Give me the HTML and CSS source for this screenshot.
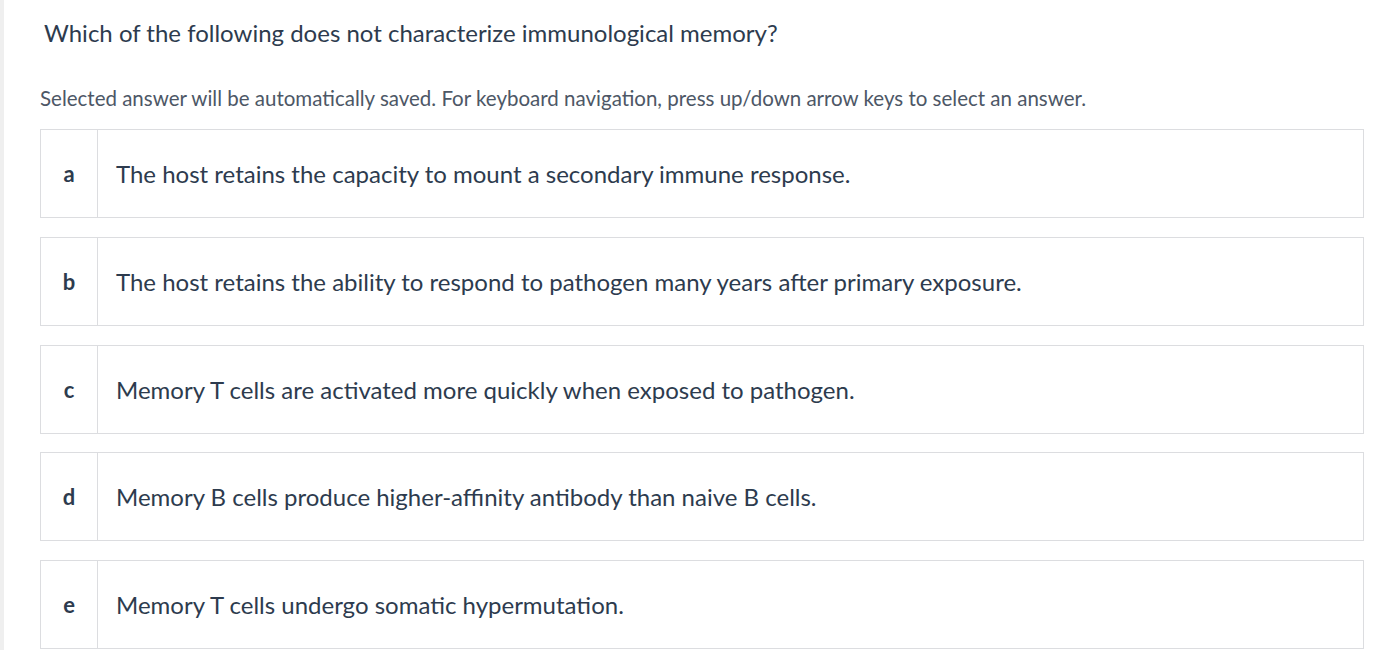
FILE: index.html
```html
<!DOCTYPE html>
<html>
<head>
<meta charset="utf-8">
<link rel="stylesheet" href="styles.css">
</head>
<body>
<div class="page">
  <h1 class="question">Which of the following does not characterize immunological memory?</h1>
  <p class="hint">Selected answer will be automatically saved. For keyboard navigation, press up/down arrow keys to select an answer.</p>
  <ul class="options">
    <li class="option"><span class="letter">a</span><span class="text">The host retains the capacity to mount a secondary immune response.</span></li>
    <li class="option"><span class="letter">b</span><span class="text">The host retains the ability to respond to pathogen many years after primary exposure.</span></li>
    <li class="option"><span class="letter">c</span><span class="text">Memory T cells are activated more quickly when exposed to pathogen.</span></li>
    <li class="option"><span class="letter">d</span><span class="text">Memory B cells produce higher-affinity antibody than naive B cells.</span></li>
    <li class="option"><span class="letter">e</span><span class="text">Memory T cells undergo somatic hypermutation.</span></li>
  </ul>
</div>
</body>
</html>
```
FILE: styles.css
```css
html, body {
  margin: 0;
  padding: 0;
  background: #ffffff;
}
body {
  font-family: "Lato", "Open Sans", sans-serif;
  color: #2d3b4e;
}
.page {
  border-left: 4px solid #efefef;
  padding: 16px 32px 0 36px;
  min-height: 650px;
  box-sizing: border-box;
}
.question {
  margin: 0 0 0 4px;
  font-size: 24px;
  font-weight: 400;
  line-height: 34px;
  color: #2d3b4e;
}
.hint {
  margin: 36px 0 19px 0;
  font-size: 20.5px;
  line-height: 24px;
  color: #4d5766;
}
.options {
  list-style: none;
  margin: 0;
  padding: 0;
  display: flex;
  flex-direction: column;
  gap: 18.75px;
}
.option {
  display: flex;
  height: 89px;
  box-sizing: border-box;
  border: 1px solid #dcdde0;
}
.letter {
  width: 56px;
  flex: none;
  border-right: 1px solid #dcdde0;
  display: flex;
  align-items: center;
  justify-content: center;
  font-size: 22px;
  font-weight: 700;
  color: #2d3b4e;
}
.text {
  display: flex;
  align-items: center;
  padding-left: 18px;
  font-size: 24px;
  color: #2d3b4e;
}
```
